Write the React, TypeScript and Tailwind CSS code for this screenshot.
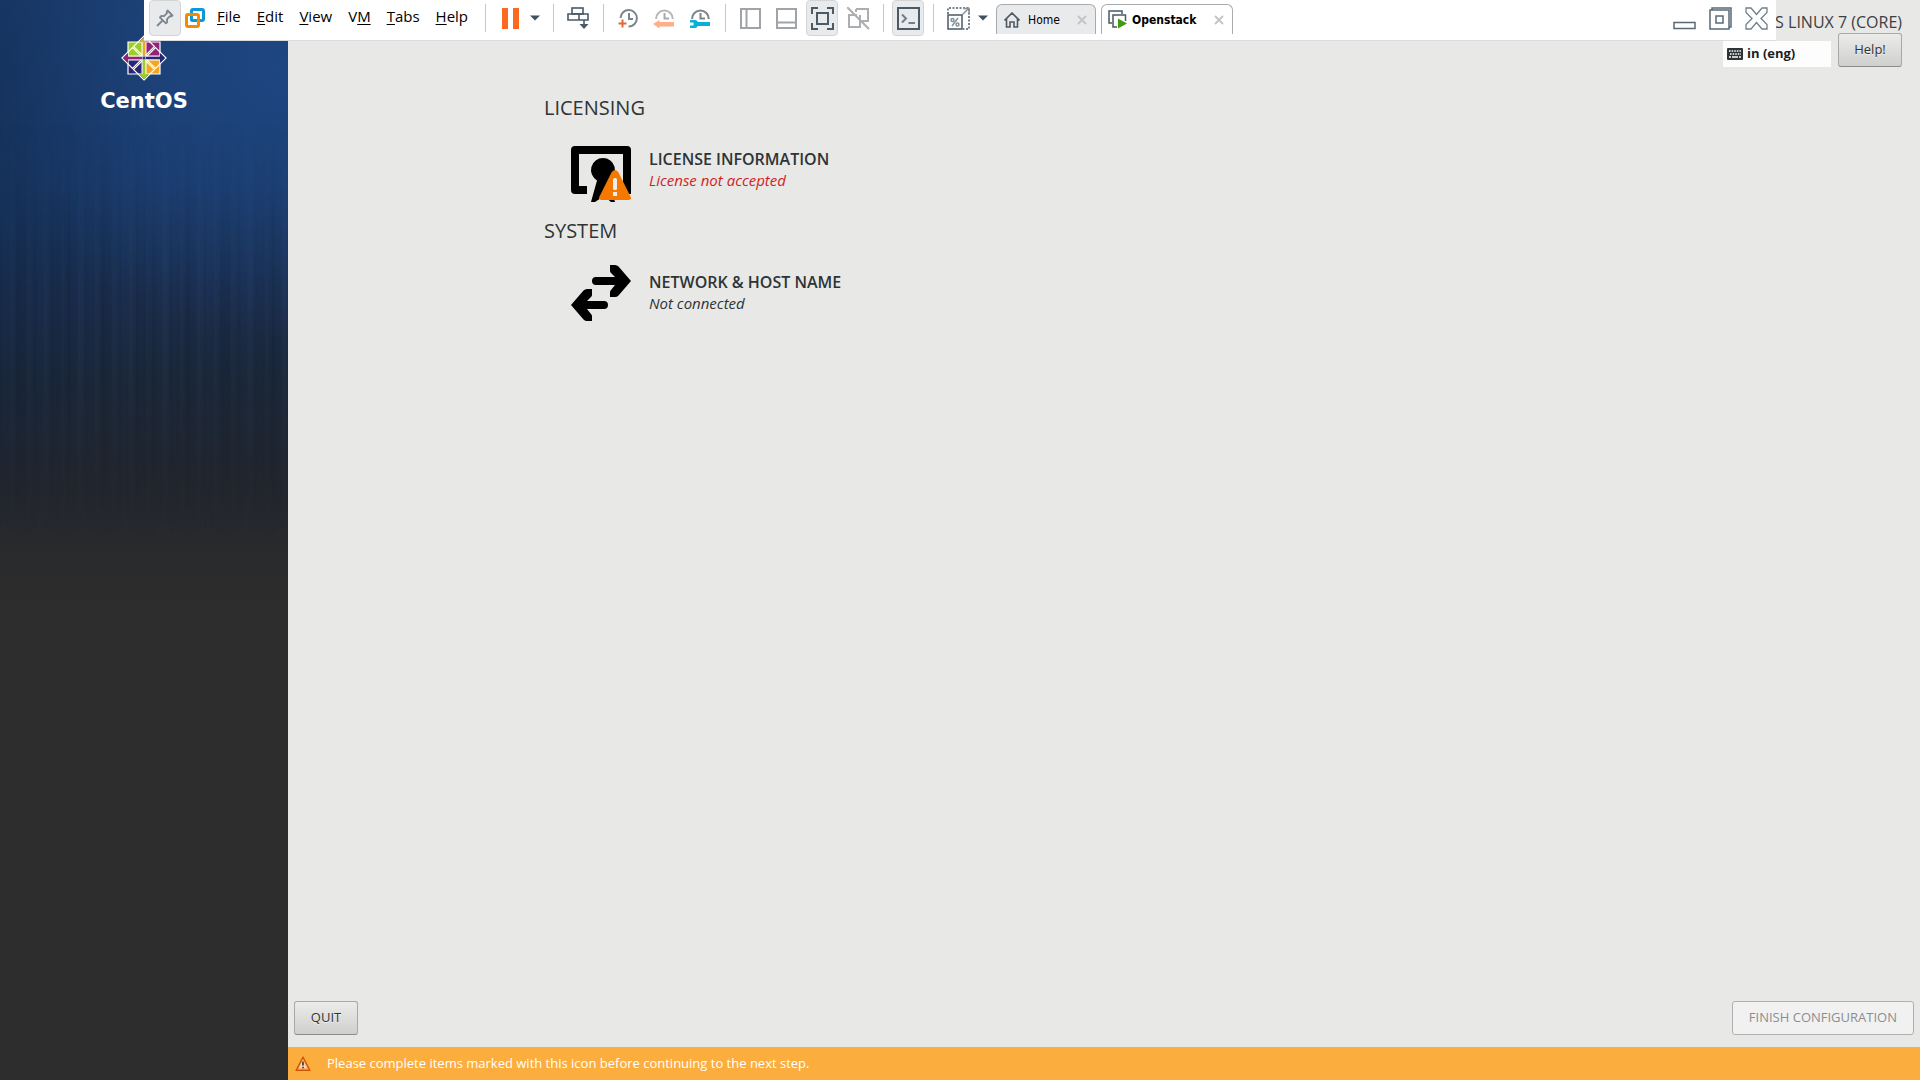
import type { ReactNode } from 'react';
import { clsx } from 'clsx';

const MENUS = [
  { before: '', key: 'F', after: 'ile' },
  { before: '', key: 'E', after: 'dit' },
  { before: '', key: 'V', after: 'iew' },
  { before: 'V', key: 'M', after: '' },
  { before: '', key: 'T', after: 'abs' },
  { before: '', key: 'H', after: 'elp' },
];

const DARK = '#4a5a66';
const MUTED = '#a0a4a8';

interface ToolProps {
  label: string;
  active?: boolean;
  children: ReactNode;
}

function Tool({ label, active, children }: ToolProps) {
  return (
    <button
      type="button"
      aria-label={label}
      className={clsx(
        'flex h-9 w-8 shrink-0 items-center justify-center rounded border',
        active ? 'border-[#d3d5d7] bg-[#e9eaec]' : 'border-transparent'
      )}
    >
      {children}
    </button>
  );
}

function Caret({ label }: { label: string }) {
  return (
    <button type="button" aria-label={label} className="-ml-1 flex h-9 w-[18px] shrink-0 items-center justify-center">
      <svg width="10" height="6" viewBox="0 0 10 6">
        <path d="M0 0.5h10L5 5.5z" fill="#3f515e" />
      </svg>
    </button>
  );
}

function Separator() {
  return <div className="mt-1 mr-1 ml-[5px] h-7 w-px shrink-0 bg-[#c4c6c8]" />;
}

function CloseMark() {
  return (
    <svg width="10" height="10" viewBox="0 0 10 10" stroke="#c3c5c7" strokeWidth="2">
      <path d="M1 1l8 8M9 1l-8 8" />
    </svg>
  );
}

function Toolbar() {
  return (
    <div className="absolute top-0 right-[7.5%] left-[7.5%] z-10 flex h-[41px] items-start gap-1 border-b border-[#dcdcdc] bg-white pr-1 pl-[5px] whitespace-nowrap">
      <Tool label="Pin toolbar" active>
        <svg width="18" height="18" viewBox="0 0 18 18" fill="none" stroke="#7d858c" strokeWidth="1.8" strokeLinejoin="round">
          <path d="M11.5 1.5l5 5-1.5 1-1-.3-3 3 .2 2.8-1.3 1.3-6-6L5.3 7l2.7.2 3-3-.3-1z" />
          <path d="M6.5 11.5L1 17" />
        </svg>
      </Tool>
      <svg className="mt-2 shrink-0" width="20" height="20" viewBox="0 0 20 20" fill="none" strokeWidth="3">
        <rect x="6.5" y="1.5" width="12" height="11" rx="1.5" stroke="#0f97d5" />
        <rect x="1.5" y="6.5" width="12" height="12" rx="1.5" stroke="#f38b00" />
        <path d="M6.5 9V11q0 1.500 1.500 1.500h2" stroke="#0f97d5" />
      </svg>
      <nav className="flex h-8 items-center font-['Open_Sans',sans-serif] text-[15px] text-black">
        {MENUS.map((menu) => (
          <button key={menu.before + menu.key} type="button" className="px-2">
            {menu.before}
            <span className="underline underline-offset-2">{menu.key}</span>
            {menu.after}
          </button>
        ))}
      </nav>
      <Separator />
      <Tool label="Suspend">
        <svg width="17" height="21" viewBox="0 0 17 21" fill="#fb6a20">
          <rect width="6" height="21" />
          <rect x="11" width="6" height="21" />
        </svg>
      </Tool>
      <Caret label="Power options" />
      <Separator />
      <Tool label="Send Ctrl+Alt+Del">
        <svg width="22" height="22" viewBox="0 0 22 22" fill="none" stroke={DARK} strokeWidth="1.6">
          <rect x="5" y="1" width="11" height="6" />
          <path d="M12 13H1V7h11zM12 7h9v6h-9" />
          <path d="M17 13v5" />
          <path d="M12.5 17h9L17 22z" fill={DARK} stroke="none" />
        </svg>
      </Tool>
      <Separator />
      <Tool label="Take snapshot">
        <svg width="22" height="22" viewBox="0 0 22 22" fill="none">
          <path d="M3.500 11A8.200 8.200 0 1 1 11.500 19.500" stroke="#7b858d" strokeWidth="2" />
          <path d="M12 6v6h4" stroke="#7b858d" strokeWidth="2" />
          <path d="M5.500 12.500v8M1.500 16.500h8" stroke="#e0683a" strokeWidth="2" />
        </svg>
      </Tool>
      <Tool label="Revert to snapshot">
        <svg width="22" height="22" viewBox="0 0 22 22" fill="none">
          <path d="M3 12A8.400 8.400 0 0 1 19.800 12" stroke="#b5b9bc" strokeWidth="2" />
          <path d="M11.500 6v5.500H16" stroke="#a5a9ad" strokeWidth="2" />
          <path d="M0 17l6.500-4v2H21v4.500H6.500v2z" fill="#ffae88" />
        </svg>
      </Tool>
      <Tool label="Manage snapshots">
        <svg width="22" height="22" viewBox="0 0 22 22" fill="none">
          <path d="M3 12A8.400 8.400 0 0 1 19.800 12" stroke="#7b858d" strokeWidth="2" />
          <path d="M11.500 6v5.500H16" stroke="#7b858d" strokeWidth="2" />
          <path d="M1 13h5q2 0 2.800 2H21v4H8.800q-.8 2-2.800 2H1v-2.500h3.500v-3H1z" fill="#07b0d6" />
        </svg>
      </Tool>
      <Separator />
      <Tool label="Show library">
        <svg width="21" height="21" viewBox="0 0 21 21" fill="none" stroke={MUTED} strokeWidth="2">
          <rect x="1" y="1" width="19" height="19" />
          <path d="M6.500 1v19" />
        </svg>
      </Tool>
      <Tool label="Show thumbnail bar">
        <svg width="21" height="21" viewBox="0 0 21 21" fill="none" stroke={MUTED} strokeWidth="2">
          <rect x="1" y="1" width="19" height="19" />
          <path d="M1 14.500h19" />
        </svg>
      </Tool>
      <Tool label="Full screen" active>
        <svg width="23" height="23" viewBox="0 0 23 23" fill="none" stroke={DARK} strokeWidth="2">
          <path d="M1 7V1h6M16 1h6v6M22 16v6h-6M7 22H1v-6" />
          <rect x="6" y="6" width="11" height="11" />
        </svg>
      </Tool>
      <Tool label="Unity mode">
        <svg width="23" height="23" viewBox="0 0 23 23" fill="none" stroke="#acafb2" strokeWidth="2">
          <path d="M9 2h12v12h-6M13 8v12H2V8h8M9 2v3" />
          <path d="M0 0l22 22" />
        </svg>
      </Tool>
      <Separator />
      <Tool label="Console view" active>
        <svg width="23" height="23" viewBox="0 0 23 23" fill="none" stroke={DARK} strokeWidth="2">
          <rect x="1" y="1" width="21" height="21" />
          <path d="M5 7.500l4 4-4 4M11.500 16H18" stroke="#70808a" />
        </svg>
      </Tool>
      <Separator />
      <Tool label="Stretch guest">
        <svg width="23" height="23" viewBox="0 0 23 23" fill="none" stroke={DARK} strokeWidth="1.5">
          <path d="M1 7V1h21v21h-6" strokeDasharray="2 1.500" />
          <rect x="1" y="8" width="14" height="14" />
          <path d="M15 8l7-7" stroke="#87929a" />
          <path d="M16 1.500h6v6" stroke="#87929a" />
          <path d="M5 19l6-8" stroke="#87929a" />
          <circle cx="5.500" cy="13" r="1.500" stroke="#87929a" />
          <circle cx="10.500" cy="17.500" r="1.500" stroke="#87929a" />
        </svg>
      </Tool>
      <Caret label="Stretch options" />
      <div className="mt-1 flex h-[30px] gap-[5px] font-['DejaVu_Sans_Condensed','DejaVu_Sans',sans-serif] text-xs text-black">
        <div className="flex w-[100px] items-center rounded-t-md border border-b-0 border-[#a9abad] bg-[#e9eaec] pr-2 pl-[7px]">
          <button type="button" className="flex flex-1 items-center gap-2">
            <svg width="16" height="16" viewBox="0 0 16 16" fill="none" stroke={DARK} strokeWidth="1.6">
              <path d="M0.500 8.500L8 1l7.500 7.500M2.500 7v8h3.500v-5h4v5h3.500V7" />
            </svg>
            Home
          </button>
          <button type="button" aria-label="Close Home">
            <CloseMark />
          </button>
        </div>
        <div className="flex w-[132px] items-center rounded-t-md border border-b-0 border-[#a9abad] bg-white pr-2 pl-[6px] font-bold">
          <button type="button" className="flex flex-1 items-center gap-[5px]">
            <svg width="19" height="19" viewBox="0 0 19 19" fill="none" stroke={DARK} strokeWidth="1.5">
              <path d="M4 13H1V1h13v3" />
              <path d="M9 17H5V5h12.500v6" />
              <path d="M10 8.500l9 5-9 5z" fill="#3f9c10" stroke="none" />
            </svg>
            Openstack
          </button>
          <button type="button" aria-label="Close Openstack">
            <CloseMark />
          </button>
        </div>
      </div>
      <div className="ml-auto flex gap-1">
        <Tool label="Minimize">
          <svg width="23" height="23" viewBox="0 0 23 23" fill="none" stroke="#596a76" strokeWidth="1.5">
            <rect x="1" y="15.500" width="21" height="6" />
          </svg>
        </Tool>
        <Tool label="Restore">
          <svg width="23" height="23" viewBox="0 0 23 23" fill="none" stroke="#596a76" strokeWidth="1.5">
            <path d="M3 3V1h19v19h-2" />
            <rect x="1" y="3" width="19" height="19" />
            <rect x="7" y="9" width="7" height="7" />
          </svg>
        </Tool>
        <Tool label="Close">
          <svg width="23" height="23" viewBox="0 0 23 23" fill="none" stroke="#71808a" strokeWidth="1.3">
            <path d="M1 1h5l5.500 6.500L17 1h5v4.500l-6 6 6 6V22h-5l-5.500-6.500L6 22H1v-4.500l6-6-6-6z" />
          </svg>
        </Tool>
      </div>
    </div>
  );
}

function CentosLogo() {
  return (
    <svg width="46" height="46" viewBox="0 0 46 46" stroke="#fff" strokeWidth="1.2">
      <path d="M7 7h15v15H7z" fill="#9ccd2a" />
      <path d="M24 7h15v15H24z" fill="#932279" />
      <path d="M7 24h15v15H7z" fill="#262577" />
      <path d="M24 24h15v15H24z" fill="#efa724" />
      <path d="M23 1l10.500 10.500L23 22 12.500 11.500z" fill="none" />
      <path d="M23 45l10.500-10.500L23 24 12.500 34.500z" fill="none" />
      <path d="M1 23l10.500-10.500L22 23 11.500 33.500z" fill="none" />
      <path d="M45 23L34.500 12.500 24 23l10.500 10.500z" fill="none" />
      {/* arrows pointing out of the centre */}
      <g stroke="none">
        <path d="M23 2l5 5h-3.500v14h-3V7H18z" fill="#efa724" />
        <path d="M23 44l5-5h-3.500V25h-3v14H18z" fill="#9ccd2a" />
        <path d="M2 23l5-5v3.500h14v3H7V28z" fill="#932279" />
        <path d="M44 23l-5-5v3.500H25v3h14V28z" fill="#262577" />
      </g>
      <path d="M21 7.500V21H7.500M25 7.500V21h13.500M21 38.500V25H7.500M25 38.500V25h13.500" fill="none" strokeWidth="1" />
      <path d="M21.500 21.500h3v3h-3z" fill="#1d437b" stroke="none" />
    </svg>
  );
}

function Sidebar() {
  return (
    <aside className="relative flex w-[15%] shrink-0 flex-col items-center bg-[#2d2d2d] bg-[radial-gradient(ellipse_300px_270px_at_100%_70px,rgba(33,80,150,0.5),transparent),radial-gradient(ellipse_160px_420px_at_0%_100px,rgba(12,34,66,0.35),transparent),linear-gradient(to_bottom,#1b3d6e_0px,#1a3a69_180px,#1b2f50_290px,#1c2839_390px,#22262e_490px,#2a2b2c_560px,#2d2d2d_620px)] pt-[35px]">
      {/* faint vertical streaks */}
      <div className="absolute inset-x-0 top-[120px] h-[420px] bg-[repeating-linear-gradient(to_right,rgba(0,0,0,0.07)_0px,transparent_4px,transparent_9px,rgba(255,255,255,0.02)_11px,transparent_17px),repeating-linear-gradient(to_right,transparent_0px,rgba(0,0,0,0.08)_23px,transparent_41px)] [mask-image:linear-gradient(to_bottom,transparent,black_40%,black_60%,transparent)]" />
      <CentosLogo />
      <span className="mt-1.5 font-['DejaVu_Sans',sans-serif] text-[21px] leading-7 font-bold text-white">CentOS</span>
    </aside>
  );
}

function LicenseIcon() {
  return (
    <svg className="shrink-0" width="60" height="60" viewBox="0 -4 60 60">
      <path d="M4 0h52q4 0 4 4v44h-8V8H8v32h8v8H4q-4 0-4-4V4q0-4 4-4z" />
      <path d="M32 12a12 12 0 0 1 6 22.400L44 56h-4l-7-6-9 6h-4l6-21.600A12 12 0 0 1 32 12z" />
      <path d="M44 24q2 0 3.500 2.500l12 24q1.500 3.500-2 3.500h-27q-3.500 0-2-3.500l12-24Q42 24 44 24z" fill="#f57900" />
      <rect x="42" y="32" width="4" height="12" rx="1.500" fill="#eee" />
      <rect x="42" y="46" width="4" height="4" fill="#eee" />
    </svg>
  );
}

function NetworkIcon() {
  return (
    <svg className="shrink-0" width="60" height="60" viewBox="0 0 60 60">
      <path d="M39 0h5q2 0 3.500 1.500L60 16 47.500 30.500Q46 32 44 32h-5v-5q0-1 1-2l4-5H25a4 4 0 0 1 0-8h19l-4-4q-1-1-1-2z" />
      <path d="M21 24h-5q-2 0-3.500 1.500L0 40l12.500 14.500Q14 56 16 56h5v-5q0-1-1-2l-4-5h17a4 4 0 0 0 0-8H16l4-4q1-1 1-2z" />
    </svg>
  );
}

interface SpokeProps {
  icon: ReactNode;
  title: string;
  status: string;
  warning?: boolean;
}

function Spoke({ icon, title, status, warning }: SpokeProps) {
  return (
    <button type="button" className="mt-5 ml-[27px] flex gap-[18px] text-left">
      {icon}
      <span className="flex flex-col pt-[7px] leading-[21px]">
        <span className="text-base/[21px] font-semibold">{title}</span>
        <span className={clsx('text-[15px]/[21px] italic', warning && 'text-[#cf1f26]')}>{status}</span>
      </span>
    </button>
  );
}

const BUTTON = 'h-[34px] rounded-[3px] border text-[13px]';
const RAISED = 'border-[#a8a9a7] border-b-[#8b8c8a] bg-linear-to-b from-[#ececeb] to-[#cfcfcd] [text-shadow:0_1px_#f2f2f2]';

export default function App() {
  return (
    <div className="relative flex min-h-screen bg-[#e8e8e6] font-['Open_Sans','Noto_Sans',sans-serif] text-[#2e3436]">
      <Toolbar />
      <Sidebar />
      <div className="flex min-w-0 flex-1 flex-col">
        <header className="flex flex-col items-end pt-3 pr-[18px]">
          <h1 className="text-base/[21px] text-[#3b4042]">S LINUX 7 (CORE)</h1>
          <div className="flex items-end gap-[7px]">
            <button type="button" className="flex h-[26px] w-[108px] items-center gap-1 bg-[#fdfdfd] pl-1 text-[13px] font-bold text-[#1c1f20]">
              <svg width="16" height="12" viewBox="0 0 16 12">
                <rect width="16" height="12" rx="1" fill="#2e3436" />
                <path d="M2 3h12M3 6h11" stroke="#fff" strokeWidth="1.6" strokeDasharray="1.600 1" />
                <path d="M2 9h2M5 9h6M12 9h2" stroke="#fff" strokeWidth="1.6" />
              </svg>
              in (eng)
            </button>
            <button type="button" className={clsx(BUTTON, RAISED, 'w-16')}>
              Help!
            </button>
          </div>
        </header>

        <main className="flex-1 pt-[27px] pl-64">
          <h2 className="text-xl/7">LICENSING</h2>
          <Spoke icon={<LicenseIcon />} title="LICENSE INFORMATION" status="License not accepted" warning />
          <h2 className="mt-[15px] text-xl/7">SYSTEM</h2>
          <Spoke icon={<NetworkIcon />} title="NETWORK & HOST NAME" status="Not connected" />
        </main>

        <footer>
          <div className="flex justify-between px-[6px] pb-3">
            <button type="button" className={clsx(BUTTON, RAISED, 'w-16')}>
              QUIT
            </button>
            <button type="button" disabled className={clsx(BUTTON, 'border-[#b0b1af] bg-[#f1f1f1] px-4 text-[#8b8e8f]')}>
              FINISH CONFIGURATION
            </button>
          </div>
          <div className="flex h-[33px] items-center gap-4 bg-[#fbad3d] pl-[7px] text-[13px] text-white">
            <svg width="16" height="16" viewBox="0 0 16 16">
              <path d="M8 1l7 13.500H1z" fill="#f08a2a" stroke="#cc5200" strokeWidth="1.2" strokeLinejoin="round" />
              <path d="M8 3.500l4.500 9h-9z" fill="#f8d8b0" />
              <path d="M8 5.500v4M8 10.700v1.600" stroke="#333" strokeWidth="1.6" />
            </svg>
            Please complete items marked with this icon before continuing to the next step.
          </div>
        </footer>
      </div>
    </div>
  );
}
